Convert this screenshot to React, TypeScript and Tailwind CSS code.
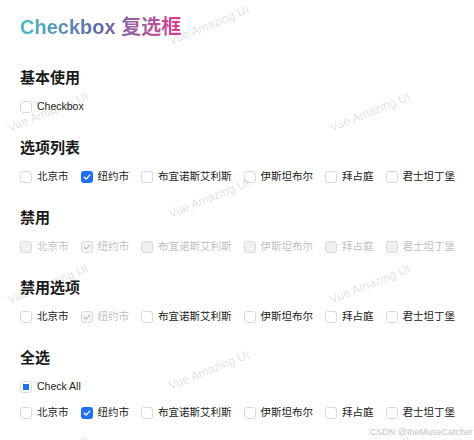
import React from 'react'

const cities = ['北京市', '纽约市', '布宜诺斯艾利斯', '伊斯坦布尔', '拜占庭', '君士坦丁堡']

type BoxState = 'off' | 'on' | 'half'

function Box({ state, disabled }: { state: BoxState; disabled?: boolean }) {
  if (state === 'on' && !disabled) {
    return (
      <span className="flex h-[12px] w-[12px] shrink-0 items-center justify-center rounded-[3px] bg-[#1f6ff5]">
        <svg width="8" height="8" viewBox="0 0 10 10" fill="none">
          <path d="M1.6 5.2 L4 7.5 L8.4 2.6" stroke="#fff" strokeWidth="1.7" strokeLinecap="round" strokeLinejoin="round" />
        </svg>
      </span>
    )
  }
  if (state === 'on' && disabled) {
    return (
      <span className="flex h-[12px] w-[12px] shrink-0 items-center justify-center rounded-[3px] border border-[#d9d9d9] bg-[#f5f5f5]">
        <svg width="8" height="8" viewBox="0 0 10 10" fill="none">
          <path d="M1.6 5.2 L4 7.5 L8.4 2.6" stroke="#b8b8b8" strokeWidth="1.4" strokeLinecap="round" strokeLinejoin="round" />
        </svg>
      </span>
    )
  }
  if (state === 'half') {
    return (
      <span className="flex h-[12px] w-[12px] shrink-0 items-center justify-center rounded-[3px] border border-[#d9d9d9] bg-white">
        <span className="h-[6px] w-[6px] bg-[#1f6ff5]" />
      </span>
    )
  }
  return (
    <span
      className={
        disabled
          ? 'h-[12px] w-[12px] shrink-0 rounded-[3px] border border-[#d9d9d9] bg-[#f0f0f0]'
          : 'h-[12px] w-[12px] shrink-0 rounded-[3px] border border-[#d9d9d9] bg-white'
      }
    />
  )
}

function Item({ label, state, disabled }: { label: string; state: BoxState; disabled?: boolean }) {
  return (
    <label className="mr-[12px] flex h-[16px] items-center">
      <Box state={state} disabled={disabled} />
      <span className={disabled ? 'ml-[5px] text-[10.5px] text-[#bfbfbf]' : 'ml-[5px] text-[10.5px] text-[#222]'}>
        {label}
      </span>
    </label>
  )
}

function Row({ checked, disabled, disabledIdx }: { checked?: number; disabled?: boolean; disabledIdx?: number }) {
  return (
    <div className="mt-[10px] flex">
      {cities.map((c, i) => (
        <Item key={c} label={c} state={i === checked ? 'on' : 'off'} disabled={disabled || i === disabledIdx} />
      ))}
    </div>
  )
}

function Heading({ children }: { children: React.ReactNode }) {
  return <h2 className="mt-[22px] text-[15px] font-bold leading-[22px] text-[#1a1a1a]">{children}</h2>
}

// watermark centres
const marks = [
  'left-[209px] top-[25px]',
  'left-[48px] top-[112px]',
  'left-[370px] top-[112px]',
  'left-[209px] top-[198px]',
  'left-[48px] top-[284px]',
  'left-[370px] top-[284px]',
  'left-[209px] top-[370px]',
  'left-[48px] top-[456px]',
  'left-[370px] top-[456px]',
]

export default function App() {
  return (
    <div
      className="relative h-[440px] w-full overflow-hidden bg-white pl-[20px]"
      style={{ fontFamily: '"Liberation Sans", "Noto Sans CJK SC", sans-serif' }}
    >
      <h1 className="mt-[13px] mb-[4px] inline-block bg-gradient-to-r from-[#45bcc3] via-[#5f6aa8] to-[#de3895] bg-clip-text text-[20px] font-bold leading-[28px] text-transparent">
        Checkbox 复选框
      </h1>

      <Heading>基本使用</Heading>
      <div className="mt-[10px] flex">
        <Item label="Checkbox" state="off" />
      </div>

      <Heading>选项列表</Heading>
      <Row checked={1} />

      <Heading>禁用</Heading>
      <Row checked={1} disabled />

      <Heading>禁用选项</Heading>
      <Row disabledIdx={1} checked={1} />

      <Heading>全选</Heading>
      <div className="mt-[10px] flex">
        <Item label="Check All" state="half" />
      </div>
      <div className="mt-[7px]">
        <Row checked={1} />
      </div>

      <div className="pointer-events-none absolute inset-0">
        {marks.map((pos, i) => (
          <span
            key={i}
            className={`absolute ${pos} -translate-x-1/2 -translate-y-1/2 -rotate-[22deg] whitespace-nowrap text-[12px] text-black/15`}
          >
            Vue Amazing UI
          </span>
        ))}
        <span className="absolute right-[1px] top-[426px] text-[9px] text-[#c4c4c4]">CSDN @theMuseCatcher</span>
      </div>
    </div>
  )
}
